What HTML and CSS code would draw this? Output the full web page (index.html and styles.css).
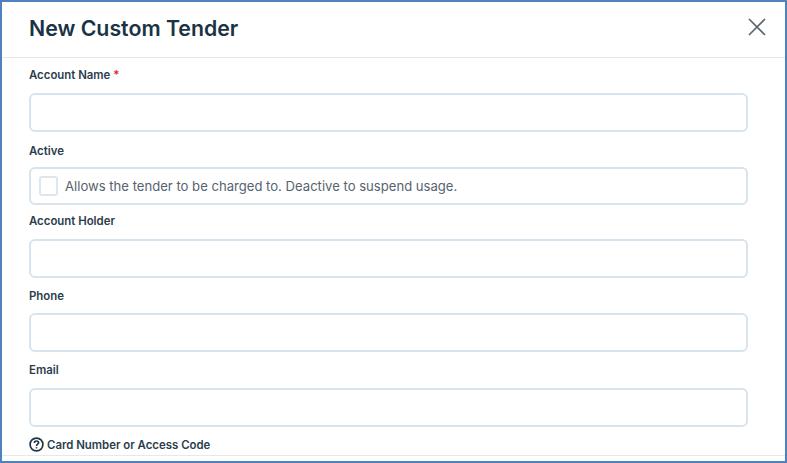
FILE: index.html

```html
<!DOCTYPE html>
<html lang="en">
<head>
  <meta charset="UTF-8" />
  <title>New Custom Tender</title>
  <link rel="stylesheet" href="styles.css">
</head>
<body>
  <div class="modal">
    <header class="modal-header">
      <h1>New Custom Tender</h1>
      <button class="close-btn" type="button" aria-label="Close">
        <svg width="18" height="18" viewBox="0 0 18 18" fill="none" stroke="#5b6770" stroke-width="1.7">
          <path d="M1 1L17 17M17 1L1 17"/>
        </svg>
      </button>
    </header>

    <form class="modal-body">
      <div class="form-group group-first">
        <label>Account Name <span class="required">*</span></label>
        <input type="text">
      </div>

      <div class="form-group group-active">
        <label>Active</label>
        <div class="check-row">
          <span class="check-box"></span>
          <span class="check-text">Allows the tender to be charged to. Deactive to suspend usage.</span>
        </div>
      </div>

      <div class="form-group group-holder">
        <label>Account Holder</label>
        <input type="text">
      </div>

      <div class="form-group group-phone">
        <label class="label-phone">Phone</label>
        <input type="text">
      </div>

      <div class="form-group">
        <label>Email</label>
        <input type="text">
      </div>

      <div class="form-group">
        <label class="label-help">
          <svg width="15" height="15" viewBox="0 0 15 15" fill="none" stroke="#1f3344" stroke-width="1.7">
            <circle cx="7.5" cy="7.5" r="6.4"/>
            <path d="M5.4 5.9C5.4 4.7 6.3 4 7.5 4C8.7 4 9.6 4.7 9.6 5.8C9.6 7.2 7.5 7.2 7.5 8.9"/>
            <path d="M7.5 10.2V11.4"/>
          </svg>
          Card Number or Access Code
        </label>
      </div>
    </form>

    <div class="modal-footer"></div>
  </div>
</body>
</html>
```

FILE: styles.css

```css
* {
  margin: 0;
  padding: 0;
  box-sizing: border-box;
}

html, body {
  height: 100%;
}

body {
  font-family: Inter, 'Liberation Sans', sans-serif;
  background-color: white;
  color: #1b3344;
  overflow: hidden;
}

.modal {
  height: 463px;
  border: 2px solid #4f81bd;
  background-color: white;
  overflow: hidden;
  position: relative;
}

.modal-header {
  display: flex;
  justify-content: space-between;
  align-items: center;
  height: 56px;
  padding: 0 19.5px 4px 27px;
  border-bottom: 1px solid #e6e8ea;
}

h1 {
  font-size: 21.3px;
  font-weight: 600;
  color: #1b3344;
}

.close-btn {
  display: flex;
  margin-bottom: 2px;
  border: none;
  background: none;
}

.modal-body {
  padding: 10px 37px 0 27px;
}

.form-group {
  margin-bottom: 11px;
}

.group-first {
  margin-bottom: 12.5px;
}

.group-active {
  margin-bottom: 9.5px;
}

.group-active label {
  margin-bottom: 9px;
}

.group-holder {
  margin-bottom: 11.5px;
}

.group-phone {
  margin-bottom: 11.5px;
}

label {
  display: block;
  height: 14px;
  line-height: 14px;
  margin-bottom: 11px;
  font-size: 11.4px;
  font-weight: 600;
  color: #2b3d4d;
}

.label-phone {
  margin-bottom: 10px;
}

.required {
  color: #e02020;
}

input {
  display: block;
  width: 100%;
  height: 38.5px;
  border: 2px solid #d6e4ee;
  border-radius: 6px;
  background-color: white;
}

.check-row {
  display: flex;
  align-items: center;
  gap: 7px;
  height: 37.5px;
  padding-left: 7.5px;
  border: 2px solid #d6e4ee;
  border-radius: 6px;
}

.check-box {
  width: 19.5px;
  height: 19.5px;
  border: 2px solid #dde7ef;
  border-radius: 3px;
}

.check-text {
  font-size: 13.1px;
  color: #56636f;
}

.label-help {
  display: flex;
  align-items: center;
  gap: 3px;
}

.modal-footer {
  position: absolute;
  left: 0;
  right: 0;
  bottom: 0;
  height: 6px;
  background-color: white;
  border-top: 1px solid #e6e8ea;
}
```
